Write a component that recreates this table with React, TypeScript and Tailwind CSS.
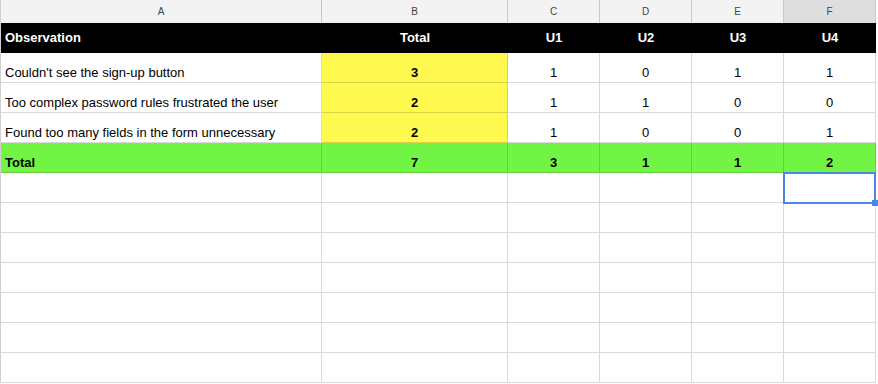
import React from "react";

type Cell = {
  text?: string;
  align?: "left" | "center";
  bold?: boolean;
  bg?: string;
};

const colLetters = ["A", "B", "C", "D", "E", "F"];

const headerRow: Cell[] = [
  { text: "Observation", align: "left", bold: true },
  { text: "Total", align: "center", bold: true },
  { text: "U1", align: "center", bold: true },
  { text: "U2", align: "center", bold: true },
  { text: "U3", align: "center", bold: true },
  { text: "U4", align: "center", bold: true },
];

const observations: [string, number, number[]][] = [
  ["Couldn't see the sign-up button", 3, [1, 0, 1, 1]],
  ["Too complex password rules frustrated the user", 2, [1, 1, 0, 0]],
  ["Found too many fields in the form unnecessary", 2, [1, 0, 0, 1]],
];

const widths = ["w-[321px]", "w-[186px]", "w-[92px]", "w-[92px]", "w-[92px]", "w-[92px]"];

function DataCell({ cell, idx }: { cell: Cell; idx: number }) {
  return (
    <div
      className={`${widths[idx]} h-[30px] shrink-0 flex items-end pb-[1px] px-[4px] border-r border-b border-black/[0.15] text-[13px] leading-[16px] ${
        cell.align === "center" ? "justify-center" : "justify-start"
      } ${cell.bold ? "font-bold" : "font-normal"} ${cell.bg ?? "bg-white"} text-black`}
    >
      <span className="whitespace-nowrap">{cell.text ?? ""}</span>
    </div>
  );
}

export default function App() {
  const rows: Cell[][] = observations.map(([label, total, users]) => [
    { text: label, align: "left" },
    { text: String(total), align: "center", bold: true, bg: "bg-[#fff84f]" },
    ...users.map((u) => ({ text: String(u), align: "center" as const })),
  ]);

  const totals = [0, 1, 2, 3].map((i) => observations.reduce((s, o) => s + o[2][i], 0));
  const sum = observations.reduce((s, o) => s + o[1], 0);
  const totalRow: Cell[] = [
    { text: "Total", align: "left", bold: true, bg: "bg-[#72f444]" },
    { text: String(sum), align: "center", bold: true, bg: "bg-[#72f444]" },
    ...totals.map((t) => ({ text: String(t), align: "center" as const, bold: true, bg: "bg-[#72f444]" })),
  ];

  const emptyRows = Array.from({ length: 7 }, () => colLetters.map(() => ({} as Cell)));

  return (
    <div
      className="w-[878px] h-[384px] overflow-hidden bg-white relative"
      style={{ fontFamily: '"Liberation Sans", Arial, sans-serif' }}
    >
      <div className="flex flex-col border-l border-[#d0d0d0] w-[876px]">
        {/* column letters */}
        <div className="flex h-[23px]">
          {colLetters.map((l, i) => (
            <div
              key={l}
              className={`${widths[i]} shrink-0 flex items-center justify-center border-r border-[#c8c8c8] text-[10px] text-[#444] ${
                i === 5 ? "bg-[#dedede]" : "bg-[#f3f3f3]"
              }`}
            >
              {l}
            </div>
          ))}
        </div>

        {/* heading row */}
        <div className="flex h-[30px] bg-black">
          {headerRow.map((c, i) => (
            <div
              key={i}
              className={`${widths[i]} shrink-0 flex items-center px-[4px] text-[13px] font-bold text-white ${
                c.align === "center" ? "justify-center" : "justify-start"
              }`}
            >
              {c.text}
            </div>
          ))}
        </div>

        {[...rows, totalRow, ...emptyRows].map((r, ri) => (
          <div key={ri} className="flex">
            {r.map((c, ci) => (
              <DataCell key={ci} cell={c} idx={ci} />
            ))}
          </div>
        ))}
      </div>

      {/* active cell F6 with fill handle */}
      <div className="absolute left-[783px] top-[172px] w-[93px] h-[32px] border-2 border-[#4a86e8] pointer-events-none" />
      <div className="absolute left-[872px] top-[200px] w-[6px] h-[6px] bg-[#4a86e8]" />
    </div>
  );
}
